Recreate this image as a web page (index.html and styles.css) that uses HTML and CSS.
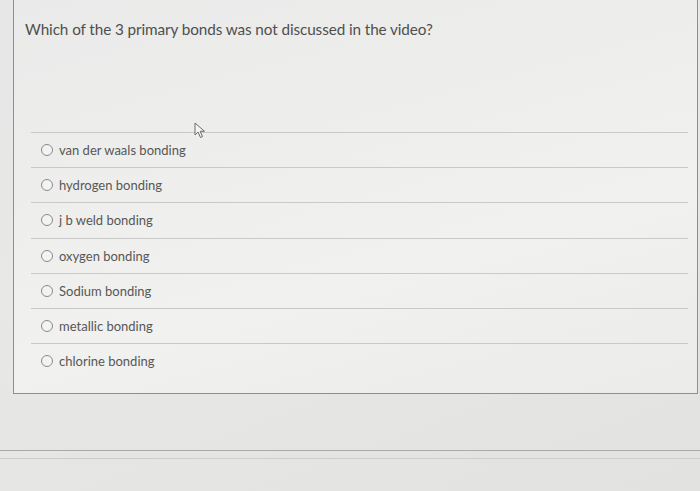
FILE: index.html
```html
<!DOCTYPE html>
<html>
<head>
<meta charset="utf-8">
<link rel="stylesheet" href="styles.css">
</head>
<body>
<div class="page">
  <div class="card">
    <div class="question">Which of the 3 primary bonds was not discussed in the video?</div>
    <ul class="answers">
      <li class="answer"><span class="radio"></span><span>van der waals bonding</span></li>
      <li class="answer"><span class="radio"></span><span>hydrogen bonding</span></li>
      <li class="answer"><span class="radio"></span><span>j b weld bonding</span></li>
      <li class="answer"><span class="radio"></span><span>oxygen bonding</span></li>
      <li class="answer"><span class="radio"></span><span>Sodium bonding</span></li>
      <li class="answer"><span class="radio"></span><span>metallic bonding</span></li>
      <li class="answer last"><span class="radio"></span><span>chlorine bonding</span></li>
    </ul>
    <svg class="cursor" width="14" height="18" viewBox="0 0 14 18"><path d="M1 1 L1 13 L4 10 L6.5 15.5 L8.5 14.6 L6.2 9.3 L10.5 9.3 Z" fill="#f4f4f4" stroke="#6b6b6b" stroke-width="1" stroke-linejoin="round"/></svg>
  </div>
  <div class="rule dark"></div>
  <div class="rule light"></div>
</div>
</body>
</html>
```
FILE: styles.css
```css
html, body {
  margin: 0;
  padding: 0;
}
body {
  width: 700px;
  height: 491px;
  overflow: hidden;
  background: linear-gradient(160deg, #e6e7e6 0%, #e8e8e6 40%, #e2e2e1 100%);
  font-family: Lato, "Open Sans", sans-serif;
}
.card {
  position: relative;
  margin-left: 13px;
  width: 685px;
  height: 394px;
  box-sizing: border-box;
  border: 1px solid #8f8f8f;
  border-top: none;
  background: linear-gradient(165deg, #e9eae9 0%, #efefed 45%, #f1f1ef 65%, #ebebea 100%);
}
.question {
  padding: 20px 0 0 11px;
  font-size: 15.3px;
  line-height: 18px;
  color: #4f4f4f;
  letter-spacing: -0.1px;
}
.answers {
  list-style: none;
  margin: 94px 9px 0 17px;
  padding: 0;
  border-top: 1px solid #c9c9c9;
}
.answer {
  display: flex;
  align-items: center;
  height: 34.2px;
  border-bottom: 1px solid #c9c9c9;
  padding-left: 10px;
  font-size: 13px;
  color: #575757;
  gap: 6px;
}
.answer.last {
  border-bottom: none;
}
.radio {
  width: 10px;
  height: 10px;
  border: 1.5px solid #8a8a8a;
  border-radius: 50%;
  background: #f3f3f3;
  flex: none;
}
.cursor {
  position: absolute;
  left: 180px;
  top: 122px;
}
.rule {
  height: 0;
}
.rule.dark {
  margin-top: 56px;
  border-top: 1px solid #a9a9a9;
}
.rule.light {
  margin-top: 7px;
  border-top: 1px solid #cdcdcd;
}
```
